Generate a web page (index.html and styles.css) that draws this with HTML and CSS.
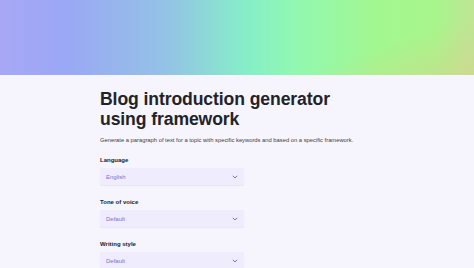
FILE: index.html
```html
<!DOCTYPE html>
<html lang="en">
<head>
    <meta charset="UTF-8">
    <meta name="viewport" content="width=device-width, initial-scale=1.0">
    <title>Blog introduction generator</title>
    <link rel="stylesheet" href="styles.css">
</head>
<body>
    <div class="banner"></div>
    <div class="main">
        <h1>Blog introduction generator using framework</h1>
        <p class="intro">Generate a paragraph of text for a topic with specific keywords and based on a specific framework.</p>

        <div class="field">
            <label>Language</label>
            <div class="select">
                <span>English</span>
                <svg width="6" height="4" viewBox="0 0 6 4"><path d="M0.8 0.8 L3 3 L5.2 0.8" fill="none" stroke="#7b70d6" stroke-width="1"/></svg>
            </div>
        </div>
        <div class="field">
            <label>Tone of voice</label>
            <div class="select">
                <span>Default</span>
                <svg width="6" height="4" viewBox="0 0 6 4"><path d="M0.8 0.8 L3 3 L5.2 0.8" fill="none" stroke="#7b70d6" stroke-width="1"/></svg>
            </div>
        </div>
        <div class="field">
            <label>Writing style</label>
            <div class="select">
                <span>Default</span>
                <svg width="6" height="4" viewBox="0 0 6 4"><path d="M0.8 0.8 L3 3 L5.2 0.8" fill="none" stroke="#7b70d6" stroke-width="1"/></svg>
            </div>
        </div>
    </div>
</body>
</html>
```

FILE: styles.css
```css
body {
    margin: 0;
    background: #f6f5fd;
    font-family: "Liberation Sans", Arial, sans-serif;
    color: #222329;
    overflow: hidden;
}
.banner {
    height: 75px;
    background:
        linear-gradient(160deg, rgba(255,255,255,0) 75%, rgba(215,210,140,0.6) 100%),
        linear-gradient(90deg, #a8a7f5 0%, #9aa8f5 14%, #94c2e6 35%, #86eec8 52%, #92f8b0 63%, #a3f78f 80%, #a8f58c 92%, #bfe596 100%);
}
.main {
    padding: 14px 0 0 100px;
}
h1 {
    margin: 0;
    font-size: 17.6px;
    line-height: 20px;
    font-weight: bold;
    letter-spacing: -0.1px;
    width: 250px;
}
.intro {
    margin: 8px 0 14px;
    font-size: 5.8px;
    color: #3a3b44;
}
.field {
    margin-bottom: 14px;
}
label {
    display: block;
    font-size: 6px;
    font-weight: bold;
    margin-bottom: 5px;
}
.select {
    width: 144px;
    height: 17px;
    box-sizing: border-box;
    padding: 0 6px 0 6px;
    background: #efecfd;
    border-radius: 2px;
    box-shadow: 0 1px 1px rgba(120, 110, 180, 0.12);
    display: flex;
    align-items: center;
    justify-content: space-between;
    font-size: 6px;
    color: #7a6fd8;
}
```
